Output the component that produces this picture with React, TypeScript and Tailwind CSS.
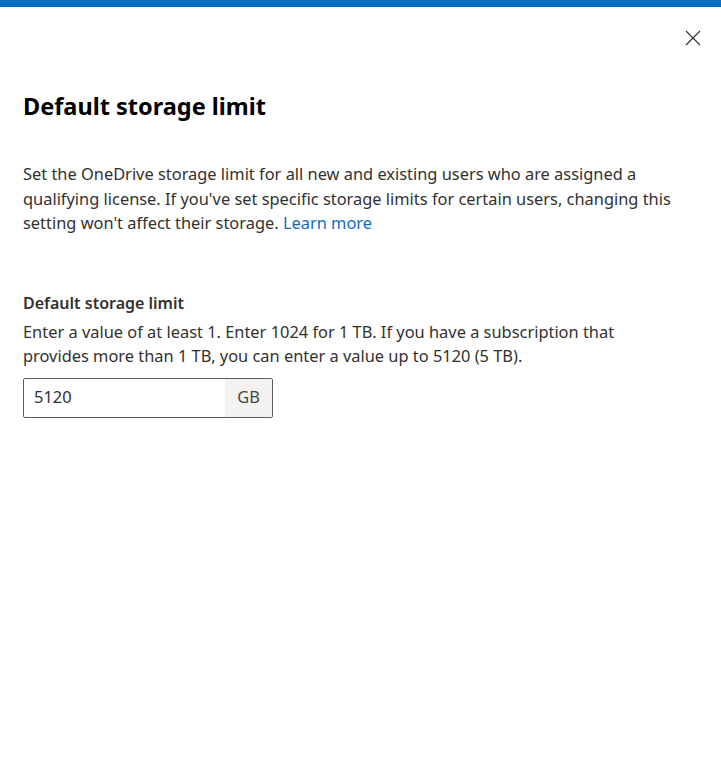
export default function App() {
  return (
    <div
      className="w-[721px] h-[757px] bg-white text-[#323130] flex flex-col"
      style={{ fontFamily: '"Noto Sans", "Open Sans", sans-serif' }}
    >
      <div className="h-[7px] bg-[#0072c6] shrink-0" />
      <div className="flex justify-end pt-[23px] pr-[20px]">
        <button className="w-[16px] h-[16px] text-[#323130]">
          <svg width="16" height="16" viewBox="0 0 16 16" fill="none" stroke="currentColor" strokeWidth="1.1">
            <path d="M1 1 L15 15 M15 1 L1 15" />
          </svg>
        </button>
      </div>
      <div className="px-[23px]">
        <h1 className="mt-[46px] text-[23.5px] font-bold leading-[28px] text-black">
          Default storage limit
        </h1>
        <p className="mt-[42px] text-[16.4px] leading-[24.5px] w-[670px]">
          Set the OneDrive storage limit for all new and existing users who are assigned a
          qualifying license. If you've set specific storage limits for certain users, changing this
          setting won't affect their storage. <span className="text-[#0f6cbd] cursor-pointer">Learn more</span>
        </p>
        <div className="mt-[56px]">
          <div className="text-[16px] font-semibold leading-[22px]">Default storage limit</div>
          <p className="text-[16.4px] leading-[24px] mt-[6px] w-[620px]">
            Enter a value of at least 1. Enter 1024 for 1 TB. If you have a subscription that
            provides more than 1 TB, you can enter a value up to 5120 (5 TB).
          </p>
          <div className="mt-[10px] w-[250px] h-[40px] border border-[#605e5c] rounded-[2px] flex overflow-hidden">
            <input
              className="flex-1 min-w-0 px-[10px] text-[16.4px] outline-none text-[#323130]"
              defaultValue="5120"
            />
            <div className="w-[47px] bg-[#f3f2f1] flex items-center justify-center text-[16.4px] text-[#484644]">
              GB
            </div>
          </div>
        </div>
      </div>
    </div>
  );
}
